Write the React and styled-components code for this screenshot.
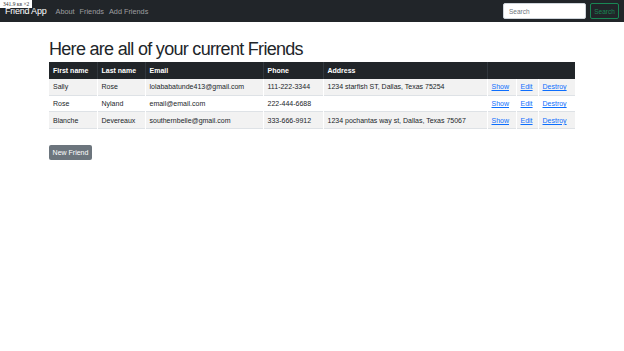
import React from 'react';
import styled, { createGlobalStyle } from 'styled-components';

const GlobalStyle = createGlobalStyle`
  body {
    margin: 0;
    background: #fff;
    font-family: "Liberation Sans", Arial, sans-serif;
    color: #212529;
  }
`;

const friends = [
  { first: 'Sally', last: 'Rose', email: 'lolababatunde413@gmail.com', phone: '111-222-3344', address: '1234 starfish ST, Dallas, Texas 75254' },
  { first: 'Rose', last: 'Nyland', email: 'email@email.com', phone: '222-444-6688', address: '' },
  { first: 'Blanche', last: 'Devereaux', email: 'southernbelle@gmail.com', phone: '333-666-9912', address: '1234 pochantas way st, Dallas, Texas 75067' },
];

const cols = [48, 48, 118, 60, 164, 29, 22, 37];

const Navbar = styled.nav`
  height: 22px;
  background: #212529;
  display: flex;
  align-items: center;
  padding: 0 5px;
  position: relative;
`;

const Brand = styled.a`
  color: #fff;
  font-size: 9px;
  letter-spacing: -0.2px;
  margin-right: 9px;
  text-decoration: none;
`;

const NavLinks = styled.div`
  display: flex;
  gap: 5px;
  flex: 1;
`;

const NavLink = styled.a`
  color: rgba(255, 255, 255, 0.55);
  font-size: 7.3px;
  text-decoration: none;
`;

const SearchForm = styled.form`
  display: flex;
  gap: 4px;
  align-items: center;
`;

const SearchInput = styled.div`
  width: 83px;
  height: 16px;
  box-sizing: border-box;
  background: #fff;
  border-radius: 2px;
  border: 1px solid #ced4da;
  font-size: 6.5px;
  color: #6c757d;
  padding: 0 5px;
  display: flex;
  align-items: center;
`;

const SearchButton = styled.div`
  width: 29px;
  height: 16px;
  box-sizing: border-box;
  border: 1px solid #198754;
  border-radius: 2px;
  color: #198754;
  font-size: 6.5px;
  display: flex;
  align-items: center;
  justify-content: center;
`;

const SizeBadge = styled.div`
  position: absolute;
  left: 0;
  top: 0;
  background: #fff;
  color: #333;
  font-family: "Liberation Serif", serif;
  font-size: 5.5px;
  padding: 0 3px;
  line-height: 8px;
`;

const Container = styled.main`
  width: 526px;
  margin: 0 auto;
  padding-top: 16px;
`;

const Title = styled.h1`
  font-size: 18px;
  letter-spacing: -0.7px;
  font-weight: 500;
  margin: 0 0 2px;
  line-height: 22px;
`;

const Table = styled.table`
  width: 100%;
  border-collapse: collapse;
  table-layout: fixed;
  font-size: 7px;
`;

const Th = styled.th`
  background: #212529;
  color: #fff;
  text-align: left;
  font-weight: bold;
  height: 17px;
  padding: 0 4px;
  border-left: 1px solid #32383e;
  &:first-child { border-left: none; }
`;

const Row = styled.tr`
  background: ${p => (p.$striped ? '#f2f2f2' : '#fff')};
  border-bottom: 1px solid #dee2e6;
`;

const Td = styled.td`
  height: 15.7px;
  padding: 0 4px;
  color: #212529;
  border-left: 1px solid #fff;
  white-space: nowrap;
  overflow: hidden;
  &:first-child { border-left: none; }
`;

const ActionLink = styled.a`
  color: #0d6efd;
  text-decoration: underline;
`;

const NewButton = styled.button`
  margin-top: 16px;
  background: #6c757d;
  color: #fff;
  border: none;
  border-radius: 2px;
  font-family: inherit;
  font-size: 7px;
  width: 43px;
  height: 15px;
  padding: 0;
`;

export default function App() {
  return (
    <>
      <GlobalStyle />
      <Navbar>
        <SizeBadge>341.9 кв ×2</SizeBadge>
        <Brand>Friend App</Brand>
        <NavLinks>
          <NavLink>About</NavLink>
          <NavLink>Friends</NavLink>
          <NavLink>Add Friends</NavLink>
        </NavLinks>
        <SearchForm>
          <SearchInput>Search</SearchInput>
          <SearchButton>Search</SearchButton>
        </SearchForm>
      </Navbar>
      <Container>
        <Title>Here are all of your current Friends</Title>
        <Table>
          <colgroup>
            {cols.map((w, i) => <col key={i} style={{ width: w }} />)}
          </colgroup>
          <thead>
            <tr>
              <Th>First name</Th>
              <Th>Last name</Th>
              <Th>Email</Th>
              <Th>Phone</Th>
              <Th>Address</Th>
              <Th colSpan={3}></Th>
            </tr>
          </thead>
          <tbody>
            {friends.map((f, i) => (
              <Row key={i} $striped={i % 2 === 0}>
                <Td>{f.first}</Td>
                <Td>{f.last}</Td>
                <Td>{f.email}</Td>
                <Td>{f.phone}</Td>
                <Td>{f.address}</Td>
                <Td><ActionLink>Show</ActionLink></Td>
                <Td><ActionLink>Edit</ActionLink></Td>
                <Td><ActionLink>Destroy</ActionLink></Td>
              </Row>
            ))}
          </tbody>
        </Table>
        <NewButton>New Friend</NewButton>
      </Container>
    </>
  );
}
